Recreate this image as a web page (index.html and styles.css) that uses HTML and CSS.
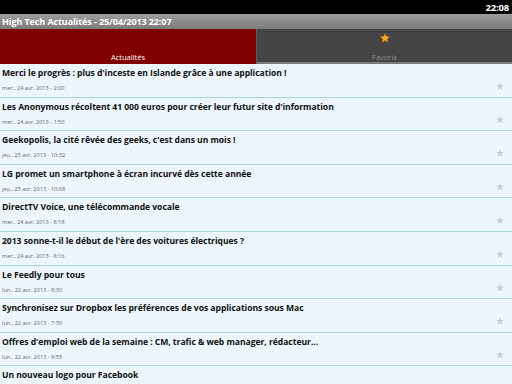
FILE: index.html
```html
<!DOCTYPE html>
<html lang="fr">

<head>
    <meta charset="UTF-8">
    <meta name="viewport" content="width=device-width, initial-scale=1.0">
    <title>High Tech Actualités</title>
    <link rel="stylesheet" href="styles.css">
</head>

<body>
    <div class="status-bar">
        <span class="clock">22:08</span>
    </div>

    <header class="title-bar">High Tech Actualités - 25/04/2013 22:07</header>

    <nav class="tabs">
        <div class="tab active">
            <span class="tab-label">Actualités</span>
        </div>
        <div class="tab">
            <svg class="tab-icon" viewBox="0 0 24 24" width="10" height="10">
                <path d="M12 1.5l3.2 6.8 7.3.9-5.4 5 1.4 7.3L12 17.9l-6.5 3.6 1.4-7.3-5.4-5 7.3-.9z" fill="#f5a623" stroke="#d9820f" stroke-width="1.2" stroke-linejoin="round"/>
            </svg>
            <span class="tab-label">Favoris</span>
        </div>
    </nav>

    <ul class="news-list">
        <li class="news-item">
            <div class="news-title">Merci le progrès : plus d'inceste en Islande grâce à une application !</div>
            <div class="news-date">mer., 24 avr. 2013 - 2:00</div>
            <span class="fav"></span>
        </li>
        <li class="news-item">
            <div class="news-title">Les Anonymous récoltent 41 000 euros pour créer leur futur site d'information</div>
            <div class="news-date">mer., 24 avr. 2013 - 1:50</div>
            <span class="fav"></span>
        </li>
        <li class="news-item">
            <div class="news-title">Geekopolis, la cité rêvée des geeks, c'est dans un mois !</div>
            <div class="news-date">jeu., 25 avr. 2013 - 10:32</div>
            <span class="fav"></span>
        </li>
        <li class="news-item">
            <div class="news-title">LG promet un smartphone à écran incurvé dès cette année</div>
            <div class="news-date">jeu., 25 avr. 2013 - 10:08</div>
            <span class="fav"></span>
        </li>
        <li class="news-item">
            <div class="news-title">DirectTV Voice, une télécommande vocale</div>
            <div class="news-date">mer., 24 avr. 2013 - 8:18</div>
            <span class="fav"></span>
        </li>
        <li class="news-item">
            <div class="news-title">2013 sonne-t-il le début de l'ère des voitures électriques ?</div>
            <div class="news-date">mer., 24 avr. 2013 - 8:16</div>
            <span class="fav"></span>
        </li>
        <li class="news-item">
            <div class="news-title">Le Feedly pour tous</div>
            <div class="news-date">lun., 22 avr. 2013 - 8:30</div>
            <span class="fav"></span>
        </li>
        <li class="news-item">
            <div class="news-title">Synchronisez sur Dropbox les préférences de vos applications sous Mac</div>
            <div class="news-date">lun., 22 avr. 2013 - 7:30</div>
            <span class="fav"></span>
        </li>
        <li class="news-item">
            <div class="news-title">Offres d'emploi web de la semaine : CM, trafic &amp; web manager, rédacteur...</div>
            <div class="news-date">lun., 22 avr. 2013 - 9:55</div>
            <span class="fav"></span>
        </li>
        <li class="news-item">
            <div class="news-title">Un nouveau logo pour Facebook</div>
            <div class="news-date">lun., 22 avr. 2013 - 9:10</div>
            <span class="fav"></span>
        </li>
    </ul>
</body>

</html>
```

FILE: styles.css
```css
* {
    margin: 0;
    padding: 0;
    box-sizing: border-box;
}

html,
body {
    width: 512px;
    height: 384px;
    overflow: hidden;
}

body {
    font-family: "Open Sans", "Noto Sans", sans-serif;
    background: #eef6fd;
    color: #111111;
}

.status-bar {
    height: 14px;
    background: #000000;
    display: flex;
    justify-content: flex-end;
    align-items: center;
    padding-right: 3px;
}

.clock {
    color: #ffffff;
    font-size: 9.5px;
    font-weight: 700;
    letter-spacing: -0.2px;
}

.title-bar {
    height: 15px;
    background: linear-gradient(#9d9d9d, #7c7c7c);
    color: #ffffff;
    font-size: 9px;
    font-weight: 700;
    line-height: 15px;
    padding-left: 2px;
    letter-spacing: -0.1px;
}

.tabs {
    display: grid;
    grid-template-columns: 1fr 1fr;
    height: 35px;
    background: #454545;
}

.tab {
    display: flex;
    flex-direction: column;
    align-items: center;
    justify-content: flex-end;
    background: #454545;
    border-left: 1px solid #5a5a5a;
    border-bottom: 2px solid #7a7a7a;
}

.tab.active {
    background: #800000;
    border-left: none;
    border-bottom: none;
    padding-bottom: 2px;
}

.tab-icon {
    margin-bottom: 9px;
}

.tab-label {
    font-size: 7.5px;
    line-height: 10px;
    color: #8c8c8c;
}

.tab.active .tab-label {
    color: #ffffff;
}

.news-list {
    list-style: none;
}

.news-item {
    position: relative;
    height: 33.6px;
    border-bottom: 1px solid #a9d2d9;
    padding: 3px 2px 0;
}

.news-title {
    font-size: 8.6px;
    font-weight: 700;
    line-height: 12px;
    letter-spacing: -0.05px;
    white-space: nowrap;
}

.news-date {
    font-size: 5.6px;
    color: #666666;
    margin-top: 5px;
}

.fav {
    position: absolute;
    right: 8px;
    top: 18px;
    width: 8px;
    height: 8px;
    background: #cccccc;
    clip-path: polygon(50% 0%, 63% 35%, 100% 38%, 71% 60%, 81% 96%, 50% 76%, 19% 96%, 29% 60%, 0% 38%, 37% 35%);
}
```
